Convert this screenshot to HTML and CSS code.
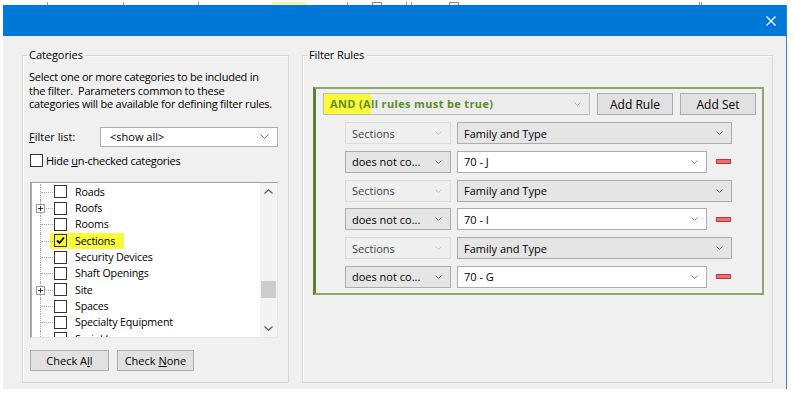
FILE: index.html
```html
<!DOCTYPE html>
<html>
<head>
<meta charset="utf-8">
<title>Filters</title>
<link rel="stylesheet" href="styles.css">
</head>
<body>
<div class="topstrip">
  <span class="tick" style="margin-left:47px"></span>
  <span class="tick" style="margin-left:75px"></span>
  <span class="tick" style="margin-left:74px"></span>
  <span class="ymark" style="margin-left:73px"></span>
  <span class="tick" style="margin-left:40px"></span>
  <span class="sq" style="margin-left:24px"></span>
  <span class="tick" style="margin-left:24px"></span>
  <span class="tick" style="margin-left:4px"></span>
  <span class="sq" style="margin-left:37px"></span>
  <span class="tick" style="margin-left:240px"></span>
  <span class="tick" style="margin-left:1px"></span>
</div>
<div class="dialog">
  <div class="titlebar">
    <svg class="close" width="10" height="10" viewBox="0 0 10 10"><path d="M0.5 0.5 L9.5 9.5 M9.5 0.5 L0.5 9.5" stroke="#fff" stroke-width="1.3" fill="none"/></svg>
  </div>
  <div class="content">
    <fieldset class="group cats">
      <legend>Categories</legend>
      <p class="desc">Select one or more categories to be included in<br>the filter.&nbsp; Parameters common to these<br>categories will be available for defining filter rules.</p>
      <div class="filter-row">
        <label class="flabel"><u>F</u>ilter list:</label>
        <div class="combo white fsel"><span class="ctext">&lt;show all&gt;</span><svg class="chev" width="9" height="5" viewBox="0 0 9 5"><path d="M0.5 0.5 L4.5 4.5 L8.5 0.5" fill="none" stroke="#6d6d6d"/></svg></div>
      </div>
      <div class="hide-row"><span class="cb"></span><span class="hide-text">Hide <u>u</u>n-checked categories</span></div>
      <div class="tree">
        <div class="tree-rows">
          <div class="row"><span class="tl"></span><span class="cb"></span><span class="lbl">Roads</span></div>
          <div class="row"><span class="tl"><span class="exp"><svg width="7" height="7" viewBox="0 0 7 7"><path d="M1 3.5 H6 M3.5 1 V6" stroke="#333" stroke-width="1"/></svg></span></span><span class="cb"></span><span class="lbl">Roofs</span></div>
          <div class="row"><span class="tl"></span><span class="cb"></span><span class="lbl">Rooms</span></div>
          <div class="row"><span class="tl short"></span><span class="hl"><span class="cb clear"><svg width="11" height="11" viewBox="0 0 11 11"><path d="M2 5.5 L4.5 8 L9 2.5" fill="none" stroke="#000" stroke-width="1.8"/></svg></span><span class="lbl">Sections</span></span></div>
          <div class="row"><span class="tl"></span><span class="cb"></span><span class="lbl">Security Devices</span></div>
          <div class="row"><span class="tl"></span><span class="cb"></span><span class="lbl">Shaft Openings</span></div>
          <div class="row"><span class="tl"><span class="exp"><svg width="7" height="7" viewBox="0 0 7 7"><path d="M1 3.5 H6 M3.5 1 V6" stroke="#333" stroke-width="1"/></svg></span></span><span class="cb"></span><span class="lbl">Site</span></div>
          <div class="row"><span class="tl"></span><span class="cb"></span><span class="lbl">Spaces</span></div>
          <div class="row"><span class="tl"></span><span class="cb"></span><span class="lbl">Specialty Equipment</span></div>
          <div class="row"><span class="tl"></span><span class="cb"></span><span class="lbl">Sprinklers</span></div>
        </div>
        <div class="vscroll">
          <div class="sb-btn"><svg width="9" height="5" viewBox="0 0 9 5"><path d="M0.5 4.5 L4.5 0.8 L8.5 4.5" fill="none" stroke="#606060" stroke-width="1.3"/></svg></div>
          <div class="sb-track"><div class="thumb"></div></div>
          <div class="sb-btn"><svg width="9" height="5" viewBox="0 0 9 5"><path d="M0.5 0.5 L4.5 4.2 L8.5 0.5" fill="none" stroke="#606060" stroke-width="1.3"/></svg></div>
        </div>
      </div>
      <div class="btns">
        <button class="btn all">Check A<u>l</u>l</button>
        <button class="btn none">Check <u>N</u>one</button>
      </div>
    </fieldset>
    <fieldset class="group rules">
      <legend>Filter Rules</legend>
      <div class="set">
        <div class="set-head">
          <div class="combo andc"><span class="and-text"><span class="mark">AND (A</span>ll rules must be true)</span><svg class="chev" width="7" height="4" viewBox="0 0 7 4"><path d="M0.5 0.5 L3.5 3.5 L6.5 0.5" fill="none" stroke="#a8a8a8"/></svg></div>
          <button class="btn add">Add Rule</button>
          <button class="btn add">Add Set</button>
        </div>
        <div class="rule-rows">
          <div class="rrow">
            <div class="combo dis op"><span class="ctext">Sections</span><svg class="chev" width="7" height="4" viewBox="0 0 7 4"><path d="M0.5 0.5 L3.5 3.5 L6.5 0.5" fill="none" stroke="#c0c0c0"/></svg></div>
            <div class="combo gray wide"><span class="ctext">Family and Type</span><svg class="chev" width="7" height="4" viewBox="0 0 7 4"><path d="M0.5 0.5 L3.5 3.5 L6.5 0.5" fill="none" stroke="#707070"/></svg></div>
          </div>
          <div class="rrow">
            <div class="combo gray op"><span class="ctext">does not co...</span><svg class="chev" width="7" height="4" viewBox="0 0 7 4"><path d="M0.5 0.5 L3.5 3.5 L6.5 0.5" fill="none" stroke="#707070"/></svg></div>
            <div class="combo white val"><span class="ctext">70 - J</span><svg class="chev" width="7" height="4" viewBox="0 0 7 4"><path d="M0.5 0.5 L3.5 3.5 L6.5 0.5" fill="none" stroke="#8a8a8a"/></svg></div>
            <span class="minus"></span>
          </div>
          <div class="rrow">
            <div class="combo dis op"><span class="ctext">Sections</span><svg class="chev" width="7" height="4" viewBox="0 0 7 4"><path d="M0.5 0.5 L3.5 3.5 L6.5 0.5" fill="none" stroke="#c0c0c0"/></svg></div>
            <div class="combo gray wide"><span class="ctext">Family and Type</span><svg class="chev" width="7" height="4" viewBox="0 0 7 4"><path d="M0.5 0.5 L3.5 3.5 L6.5 0.5" fill="none" stroke="#707070"/></svg></div>
          </div>
          <div class="rrow">
            <div class="combo gray op"><span class="ctext">does not co...</span><svg class="chev" width="7" height="4" viewBox="0 0 7 4"><path d="M0.5 0.5 L3.5 3.5 L6.5 0.5" fill="none" stroke="#707070"/></svg></div>
            <div class="combo white val"><span class="ctext">70 - I</span><svg class="chev" width="7" height="4" viewBox="0 0 7 4"><path d="M0.5 0.5 L3.5 3.5 L6.5 0.5" fill="none" stroke="#8a8a8a"/></svg></div>
            <span class="minus"></span>
          </div>
          <div class="rrow">
            <div class="combo dis op"><span class="ctext">Sections</span><svg class="chev" width="7" height="4" viewBox="0 0 7 4"><path d="M0.5 0.5 L3.5 3.5 L6.5 0.5" fill="none" stroke="#c0c0c0"/></svg></div>
            <div class="combo gray wide"><span class="ctext">Family and Type</span><svg class="chev" width="7" height="4" viewBox="0 0 7 4"><path d="M0.5 0.5 L3.5 3.5 L6.5 0.5" fill="none" stroke="#707070"/></svg></div>
          </div>
          <div class="rrow">
            <div class="combo gray op"><span class="ctext">does not co...</span><svg class="chev" width="7" height="4" viewBox="0 0 7 4"><path d="M0.5 0.5 L3.5 3.5 L6.5 0.5" fill="none" stroke="#707070"/></svg></div>
            <div class="combo white val"><span class="ctext">70 - G</span><svg class="chev" width="7" height="4" viewBox="0 0 7 4"><path d="M0.5 0.5 L3.5 3.5 L6.5 0.5" fill="none" stroke="#8a8a8a"/></svg></div>
            <span class="minus"></span>
          </div>
        </div>
      </div>
    </fieldset>
  </div>
</div>
</body>
</html>
```
FILE: styles.css
```css
* { box-sizing: border-box; }
html, body { margin: 0; padding: 0; background: #fff; }
body {
  width: 794px;
  height: 395px;
  overflow: hidden;
  font-family: "Open Sans", "Noto Sans", sans-serif;
  font-size: 11px;
  color: #000;
}
u { text-decoration: underline; text-underline-offset: 1px; }

/* strip of the application behind the dialog */
.topstrip {
  height: 5px;
  display: flex;
  align-items: flex-end;
}
.tick { width: 1px; height: 3px; background: #9a9a9a; flex: none; }
.ymark { width: 35px; height: 3px; background: #f5f59c; flex: none; }
.sq { width: 10px; height: 3px; border: 1px solid #8a8a8a; border-bottom: none; flex: none; }

.dialog {
  margin-left: 3px;
  width: 784px;
  height: 384px;
  border-right: 1px solid #2a88d8;
  display: flex;
  flex-direction: column;
}
.titlebar {
  height: 31px;
  flex: none;
  background: #0078d7;
  display: flex;
  justify-content: flex-end;
  align-items: center;
  padding-right: 10px;
}
.content {
  flex: 1;
  background: #f0f0f0;
  display: flex;
  gap: 13px;
  padding: 12px 13px 0 19px;
}

/* group boxes */
.group {
  margin: 0;
  height: 335px;
  min-width: 0;
  border: 1px solid #d8d8d8;
  box-shadow: inset 1px 1px 0 #fbfbfb;
}
.group legend {
  padding: 0 2px;
  line-height: 14px;
  font-size: 11px;
}
.cats { width: 267px; padding: 0 6px; }
.cats legend { margin-left: -2px; letter-spacing: -0.05px; }
.rules { width: 471px; padding: 0 8px 0 10px; }
.rules legend { margin-left: -6px; letter-spacing: -0.1px; }

.desc {
  margin: 8px 0 0 0;
  line-height: 13.5px;
  white-space: nowrap;
  letter-spacing: -0.24px;
}

.filter-row {
  margin-top: 16px;
  height: 20px;
  display: flex;
  align-items: center;
}
.flabel { width: 71px; flex: none; }

/* combos */
.combo {
  height: 22px;
  display: flex;
  align-items: center;
  justify-content: space-between;
  border: 1px solid #acacac;
  background: #e5e5e5;
  padding: 0 8px 0 6px;
  flex: none;
  white-space: nowrap;
}
.combo.white { background: #fff; border-color: #abadb3; }
.fsel { width: 178px; height: 20px; padding-left: 9px; border-color: #a3a3a3; }
.combo.dis { background: #efefef; border-color: #dcdcdc; color: #444; }
.op { width: 106px; }
.wide { width: 275px; }
.val { width: 250px; }
.chev { flex: none; }

.hide-row {
  margin-top: 7px;
  height: 13px;
  display: flex;
  align-items: center;
}
.hide-row .cb { margin-left: 1px; margin-right: 3px; }
.hide-text { letter-spacing: -0.27px; }

.cb {
  width: 13px;
  height: 13px;
  flex: none;
  border: 1px solid #333;
  background: #fff;
  display: flex;
  align-items: center;
  justify-content: center;
}
.cb.clear { background: transparent; }

/* tree list */
.tree {
  margin-top: 15px;
  margin-left: 1px;
  width: 248px;
  height: 156px;
  background: #fff;
  border-top: 1px solid #a0a0a0;
  border-left: 2px solid #a8a8a8;
  border-right: 1px solid #e6e6e6;
  border-bottom: 1px solid #e6e6e6;
  display: flex;
  overflow: hidden;
}
.tree-rows {
  flex: 1;
  padding-top: 1px;
  overflow: hidden;
}
.row {
  height: 16.35px;
  display: flex;
  align-items: center;
  white-space: nowrap;
}
.tl {
  position: relative;
  align-self: stretch;
  margin-left: 8px;
  width: 14px;
  flex: none;
  border-left: 1px dotted #a6a6a6;
}
.tl::after {
  content: "";
  position: absolute;
  left: 0;
  top: 50%;
  width: 12px;
  border-top: 1px dotted #a6a6a6;
}
.tl.short { width: 10px; }
.exp {
  position: absolute;
  left: -5px;
  top: 4px;
  width: 9px;
  height: 9px;
  border: 1px solid #9a9a9a;
  background: #fff;
  z-index: 1;
  display: flex;
  align-items: center;
  justify-content: center;
}
.lbl {
  margin-left: 8px;
  font-size: 10.7px;
  letter-spacing: -0.18px;
}
.hl {
  display: flex;
  align-items: center;
  height: 16px;
  background: #fbfb3a;
  padding-left: 4px;
  padding-right: 9px;
}
.vscroll {
  width: 17px;
  flex: none;
  background: #f3f3f3;
  display: flex;
  flex-direction: column;
}
.sb-btn {
  height: 17px;
  flex: none;
  display: flex;
  align-items: center;
  justify-content: center;
}
.sb-track { flex: 1; padding-top: 81px; }
.thumb { height: 17px; background: #cdcdcd; margin: 0 1px; }

/* buttons */
.btn {
  font-family: inherit;
  font-size: 11px;
  color: #000;
  background: #e1e1e1;
  border: 1px solid #adadad;
  height: 21px;
  padding: 0;
  margin: 0;
}
.btns {
  margin-top: 12px;
  margin-left: 1px;
  display: flex;
  gap: 8px;
}
.btn.all { width: 79px; }
.btn.none { width: 77px; }

/* filter rule set */
.set {
  margin-top: 25px;
  height: 208px;
  border: 2px solid #8fa866;
  border-left: 3px solid #5f7f34;
  padding: 4px 6px 0 7px;
}
.set-head {
  display: flex;
  gap: 7px;
  height: 22px;
}
.andc {
  width: 267px;
  background: #ececec;
  border-color: #bdbdbd;
  padding-left: 0;
}
.and-text {
  font-weight: bold;
  color: #5e8d2c;
  line-height: 20px;
  letter-spacing: 0.35px;
}
.mark {
  background: #fbfb3a;
  padding-left: 6px;
  display: inline-block;
  line-height: 20px;
}
.btn.add { width: 76px; height: 22px; font-size: 12px; }

.rule-rows {
  margin-top: 7px;
  padding-left: 22px;
  display: flex;
  flex-direction: column;
  gap: 6.8px;
}
.rrow {
  display: flex;
  align-items: center;
  gap: 6px;
  height: 22px;
}
.minus {
  margin-left: 3px;
  width: 15px;
  height: 5px;
  background: #ec6f6f;
  border: 1px solid #b83a3a;
  flex: none;
}
```
